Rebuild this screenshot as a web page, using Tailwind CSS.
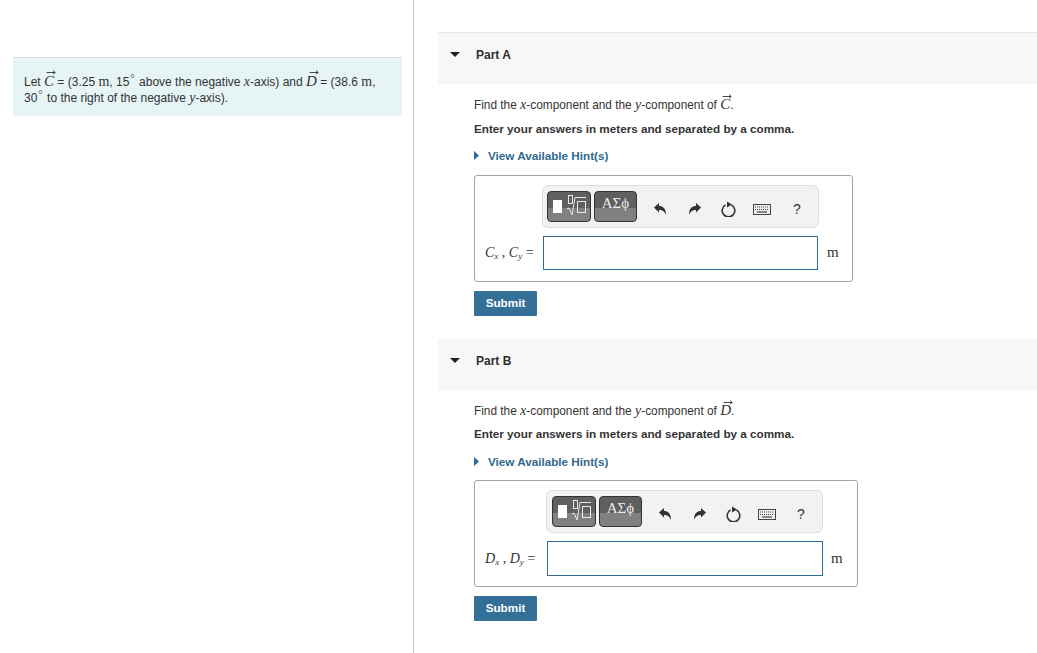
<!DOCTYPE html>
<html>
<head>
<meta charset="utf-8">
<script src="https://cdn.jsdelivr.net/npm/@tailwindcss/browser@4"></script>
</head>
<body class="bg-white">
<div class="flex h-[653px] w-[1037px] overflow-hidden bg-white font-['Liberation_Sans',sans-serif] text-[#333]">
  <aside class="h-full w-[414px] shrink-0 border-r border-[#c4c4c4] pl-[13px] pr-[11px] pt-[57px]">
    <div class="h-[59px] border-t border-[#d5dfe1] bg-[#e6f4f6] pl-[11px] pr-[20px] pt-[16px] text-[12px] leading-[15px]">
      <p class="whitespace-nowrap">Let <span class="relative font-['Liberation_Serif',serif] text-[15px] italic">C<svg class="absolute left-[2px] top-[-4px] h-[6px] w-[10px]" viewBox="0 0 10 6" fill="none" stroke="#333" stroke-width="0.9"><path d="M0.5 3.5H9M7 1.5L9.3 3.5L7 5"/></svg></span> = (3.25 <span class="font-['Liberation_Serif',serif] text-[14px]">m</span>, 15<span class="relative top-[-4px] mx-[1px] font-['Liberation_Serif',serif] text-[11px] leading-none">°</span> above the negative <span class="font-['Liberation_Serif',serif] text-[14px] italic">x</span>-axis) and <span class="relative font-['Liberation_Serif',serif] text-[15px] italic">D<svg class="absolute left-[3px] top-[-4px] h-[6px] w-[10px]" viewBox="0 0 10 6" fill="none" stroke="#333" stroke-width="0.9"><path d="M0.5 3.5H9M7 1.5L9.3 3.5L7 5"/></svg></span> = (38.6 <span class="font-['Liberation_Serif',serif] text-[14px]">m</span>,</p>
      <p class="whitespace-nowrap">30<span class="relative top-[-4px] mx-[1px] font-['Liberation_Serif',serif] text-[11px] leading-none">°</span> to the right of the negative <span class="font-['Liberation_Serif',serif] text-[14px] italic">y</span>-axis).</p>
    </div>
  </aside>

  <main class="min-w-0 flex-1 pl-[24px] pt-[32px]">
    <!-- Part A -->
    <section class="h-[307px]">
      <div class="relative h-[52px] border-t border-[#e4e4e4] bg-[#f7f7f7] pl-[38px] pt-[15px] text-[12px] font-bold leading-[15px] text-[#2f2f2f]">
        <svg class="absolute left-[12px] top-[19px] h-[5px] w-[10px]" viewBox="0 0 10 5"><path d="M0 0H10L5 5Z" fill="#222"/></svg>
        Part A
      </div>
      <div class="pl-[36px]">
        <p class="mt-[11px] h-[18px] whitespace-nowrap text-[11.85px] leading-[18px]">Find the <span class="font-['Liberation_Serif',serif] text-[14px] italic">x</span>-component and the <span class="font-['Liberation_Serif',serif] text-[14px] italic">y</span>-component of <span class="relative font-['Liberation_Serif',serif] text-[15px] italic">C<svg class="absolute left-[2px] top-[-3px] h-[6px] w-[10px]" viewBox="0 0 10 6" fill="none" stroke="#333" stroke-width="0.9"><path d="M0.5 3.5H9M7 1.5L9.3 3.5L7 5"/></svg></span>.</p>
        <p class="mt-[8px] h-[15px] whitespace-nowrap text-[11.7px] font-bold leading-[15px]">Enter your answers in meters and separated by a comma.</p>
        <p class="mt-[12px] flex h-[15px] items-center whitespace-nowrap text-[11.7px] font-bold leading-[15px] text-[#2f6a91]"><svg class="mr-[9px] h-[9px] w-[5px]" viewBox="0 0 5 9"><path d="M0 0L5 4.5L0 9Z" fill="#2f6a91"/></svg>View Available Hint(s)</p>
        <div class="mt-[12px] flex h-[107px] w-[379px] flex-col rounded-[3px] border border-[#a5a5a5] pl-[9px] pt-[9px]">
          <div class="ml-[58px] flex h-[43px] w-[277px] items-center rounded-[6px] border border-[#dedede] bg-[#f2f2f2] pl-[4px]">
            <div class="relative h-[31px] w-[44px] rounded-[4px] border border-[#333] bg-[linear-gradient(#5f5f60_0,#5f5f60_55%,#808081_55%,#808081_100%)]">
              <span class="absolute left-[5px] top-[8px] h-[13px] w-[9px] bg-white"></span>
              <svg class="absolute left-[18px] top-[3px] h-[24px] w-[22px]" viewBox="0 0 22 24" fill="none" stroke="#e8e8e8" stroke-width="1"><rect x="2.500" y="0.500" width="4" height="8"/><path d="M1 14L3 13L6 20L9 2.500H20"/><rect x="11.500" y="6.500" width="8" height="11"/></svg>
            </div>
            <div class="ml-[3px] flex h-[31px] w-[43px] justify-center rounded-[4px] border border-[#333] bg-[linear-gradient(#5f5f60_0,#5f5f60_55%,#808081_55%,#808081_100%)] pt-[2px] font-['Liberation_Serif',serif] text-[15px] leading-[18px] text-[#eee]">ΑΣϕ</div>
            <svg class="ml-[16px] mt-[4px] h-[14px] w-[14px]" viewBox="0 0 14 14"><path d="M1 5.500L6 1V4C10 4 13 6.500 13 13C11.500 9.500 10 8 6 8V10.500Z" fill="#333"/></svg>
            <svg class="ml-[21px] mt-[4px] h-[14px] w-[14px]" viewBox="0 0 14 14"><path d="M13 5.500L8 1V4C4 4 1 6.500 1 13C2.500 9.500 4 8 8 8V10.500Z" fill="#333"/></svg>
            <svg class="ml-[19px] mt-[4px] h-[16px] w-[15px]" viewBox="0 0 15 16" fill="none"><path d="M10.500 4A6.300 6.300 0 1 1 4.500 4" stroke="#333" stroke-width="1.600"/><path d="M6 0.500L11 3.500L6 6.500Z" fill="#333"/></svg>
            <svg class="ml-[17px] mt-[6px] h-[11px] w-[18px]" viewBox="0 0 18 11"><rect x="0.500" y="0.500" width="17" height="10" fill="#eee" stroke="#444"/><path d="M2 3H16M2 5.500H16" stroke="#444" stroke-width="1.200" stroke-dasharray="1 1"/><path d="M4 8H14" stroke="#444" stroke-width="1.200"/></svg>
            <span class="ml-[22px] mt-[4px] text-[14px] leading-none text-[#333]">?</span>
          </div>
          <div class="mt-[7px] flex h-[35px] items-center">
            <span class="w-[59px] shrink-0 whitespace-nowrap pl-[1px] font-['Liberation_Serif',serif] text-[14px] italic">C<sub class="text-[9px]">x</sub> , C<sub class="text-[9px]">y</sub> <span class="not-italic">=</span></span>
            <div class="h-[34px] w-[275px] shrink-0 border border-[#2f6a91] bg-white"></div>
            <span class="ml-[9px] font-['Liberation_Serif',serif] text-[15px]">m</span>
          </div>
        </div>
        <button class="mt-[9px] h-[25px] w-[63px] rounded-[1px] bg-[#346f97] pb-[2px] text-[11.7px] font-bold text-white">Submit</button>
      </div>
    </section>

    <!-- Part B -->
    <section>
      <div class="relative h-[51px] bg-[#f7f7f7] pl-[38px] pt-[14px] text-[12px] font-bold leading-[15px] text-[#2f2f2f]">
        <svg class="absolute left-[12px] top-[19px] h-[5px] w-[10px]" viewBox="0 0 10 5"><path d="M0 0H10L5 5Z" fill="#222"/></svg>
        <span class="relative top-[1px]">Part B</span>
      </div>
      <div class="pl-[36px]">
        <p class="mt-[11px] h-[18px] whitespace-nowrap text-[11.85px] leading-[18px]">Find the <span class="font-['Liberation_Serif',serif] text-[14px] italic">x</span>-component and the <span class="font-['Liberation_Serif',serif] text-[14px] italic">y</span>-component of <span class="relative font-['Liberation_Serif',serif] text-[15px] italic">D<svg class="absolute left-[3px] top-[-3px] h-[6px] w-[10px]" viewBox="0 0 10 6" fill="none" stroke="#333" stroke-width="0.9"><path d="M0.5 3.5H9M7 1.5L9.3 3.5L7 5"/></svg></span>.</p>
        <p class="mt-[7px] h-[15px] whitespace-nowrap text-[11.7px] font-bold leading-[15px]">Enter your answers in meters and separated by a comma.</p>
        <p class="mt-[13px] flex h-[15px] items-center whitespace-nowrap text-[11.7px] font-bold leading-[15px] text-[#2f6a91]"><svg class="mr-[9px] h-[9px] w-[5px]" viewBox="0 0 5 9"><path d="M0 0L5 4.5L0 9Z" fill="#2f6a91"/></svg>View Available Hint(s)</p>
        <div class="mt-[11px] flex h-[107px] w-[384px] flex-col rounded-[3px] border border-[#a5a5a5] pl-[9px] pt-[9px]">
          <div class="ml-[62px] flex h-[43px] w-[277px] items-center rounded-[6px] border border-[#dedede] bg-[#f2f2f2] pl-[5px]">
            <div class="relative h-[31px] w-[44px] rounded-[4px] border border-[#333] bg-[linear-gradient(#5f5f60_0,#5f5f60_55%,#808081_55%,#808081_100%)]">
              <span class="absolute left-[5px] top-[8px] h-[13px] w-[9px] bg-white"></span>
              <svg class="absolute left-[18px] top-[3px] h-[24px] w-[22px]" viewBox="0 0 22 24" fill="none" stroke="#e8e8e8" stroke-width="1"><rect x="2.500" y="0.500" width="4" height="8"/><path d="M1 14L3 13L6 20L9 2.500H20"/><rect x="11.500" y="6.500" width="8" height="11"/></svg>
            </div>
            <div class="ml-[3px] flex h-[31px] w-[43px] justify-center rounded-[4px] border border-[#333] bg-[linear-gradient(#5f5f60_0,#5f5f60_55%,#808081_55%,#808081_100%)] pt-[2px] font-['Liberation_Serif',serif] text-[15px] leading-[18px] text-[#eee]">ΑΣϕ</div>
            <svg class="ml-[16px] mt-[4px] h-[14px] w-[14px]" viewBox="0 0 14 14"><path d="M1 5.500L6 1V4C10 4 13 6.500 13 13C11.500 9.500 10 8 6 8V10.500Z" fill="#333"/></svg>
            <svg class="ml-[21px] mt-[4px] h-[14px] w-[14px]" viewBox="0 0 14 14"><path d="M13 5.500L8 1V4C4 4 1 6.500 1 13C2.500 9.500 4 8 8 8V10.500Z" fill="#333"/></svg>
            <svg class="ml-[19px] mt-[4px] h-[16px] w-[15px]" viewBox="0 0 15 16" fill="none"><path d="M10.500 4A6.300 6.300 0 1 1 4.500 4" stroke="#333" stroke-width="1.600"/><path d="M6 0.500L11 3.500L6 6.500Z" fill="#333"/></svg>
            <svg class="ml-[17px] mt-[6px] h-[11px] w-[18px]" viewBox="0 0 18 11"><rect x="0.500" y="0.500" width="17" height="10" fill="#eee" stroke="#444"/><path d="M2 3H16M2 5.500H16" stroke="#444" stroke-width="1.200" stroke-dasharray="1 1"/><path d="M4 8H14" stroke="#444" stroke-width="1.200"/></svg>
            <span class="ml-[21px] mt-[4px] text-[14px] leading-none text-[#333]">?</span>
          </div>
          <div class="mt-[8px] flex h-[35px] items-center">
            <span class="w-[63px] shrink-0 whitespace-nowrap pl-[1px] font-['Liberation_Serif',serif] text-[14px] italic">D<sub class="text-[9px]">x</sub> , D<sub class="text-[9px]">y</sub> <span class="not-italic">=</span></span>
            <div class="h-[35px] w-[276px] shrink-0 border border-[#2f6a91] bg-white"></div>
            <span class="ml-[8px] font-['Liberation_Serif',serif] text-[15px]">m</span>
          </div>
        </div>
        <button class="mt-[9px] h-[25px] w-[63px] rounded-[1px] bg-[#346f97] pb-[2px] text-[11.7px] font-bold text-white">Submit</button>
      </div>
    </section>
  </main>
</div>
</body>
</html>
